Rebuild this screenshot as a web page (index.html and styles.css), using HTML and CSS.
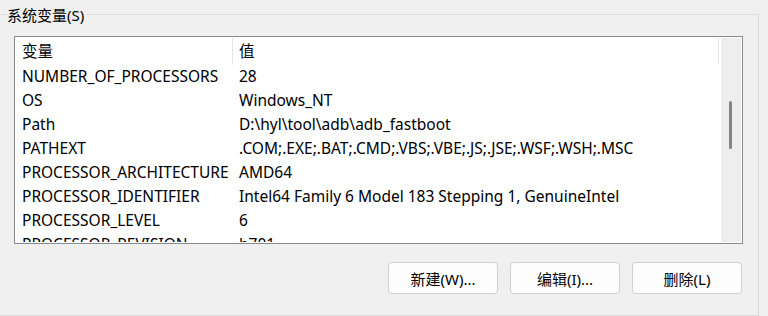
FILE: index.html
```html
<!DOCTYPE html>
<html lang="zh-CN">
<head>
  <meta charset="UTF-8">
  <title>系统变量</title>
  <link rel="stylesheet" href="styles.css">
</head>
<body>

<div class="group">
  <div class="group-title"><span>系统变量(S)</span></div>

  <!-- 变量列表 -->
  <div class="list">
    <div class="list-body">
      <div class="list-head">
        <div class="col-name">变量</div>
        <div class="col-sep"></div>
        <div class="col-value">值</div>
        <div class="col-sep"></div>
      </div>
      <div class="row"><div class="name">NUMBER_OF_PROCESSORS</div><div class="value">28</div></div>
      <div class="row"><div class="name">OS</div><div class="value">Windows_NT</div></div>
      <div class="row"><div class="name">Path</div><div class="value">D:\hyl\tool\adb\adb_fastboot</div></div>
      <div class="row"><div class="name">PATHEXT</div><div class="value">.COM;.EXE;.BAT;.CMD;.VBS;.VBE;.JS;.JSE;.WSF;.WSH;.MSC</div></div>
      <div class="row"><div class="name">PROCESSOR_ARCHITECTURE</div><div class="value">AMD64</div></div>
      <div class="row"><div class="name">PROCESSOR_IDENTIFIER</div><div class="value">Intel64 Family 6 Model 183 Stepping 1, GenuineIntel</div></div>
      <div class="row"><div class="name">PROCESSOR_LEVEL</div><div class="value">6</div></div>
      <div class="row"><div class="name">PROCESSOR_REVISION</div><div class="value">b701</div></div>
    </div>
    <div class="scrollbar">
      <div class="thumb"></div>
    </div>
  </div>

  <div class="buttons">
    <button class="btn">新建(W)...</button>
    <button class="btn">编辑(I)...</button>
    <button class="btn">删除(L)</button>
  </div>
</div>

</body>
</html>
```

FILE: styles.css
```css
body {
  margin: 0;
  background-color: #f0f0f0;
  font-family: "Noto Sans", "Noto Sans CJK SC", sans-serif;
  font-size: 15.5px;
  color: #000;
}

.group {
  margin-top: 14px;
  width: 758px;
  height: 300px;
  border-top: 1px solid #dcdcdc;
  border-right: 1px solid #dcdcdc;
  border-bottom: 1px solid #dcdcdc;
}

.group-title {
  height: 18px;
  margin-top: -9px;
  line-height: 18px;
  font-size: 15px;
}

.group-title span {
  margin-left: 7px;
  padding-right: 3px;
  background-color: #f0f0f0;
}

.list {
  display: flex;
  margin: 12px 0 0 14px;
  width: 725px;
  height: 204px;
  padding: 1px;
  border: 1px solid #868a91;
  background-color: white;
}

.list-body {
  flex: 1;
  overflow: hidden;
}

.list-head {
  display: grid;
  grid-template-columns: 216px 1px 485px 1px;
  height: 26px;
  line-height: 26px;
}

.col-name, .col-value {
  padding-left: 6px;
}

.col-sep {
  background-color: #e5e5e5;
}

.row {
  display: grid;
  grid-template-columns: 217px 1fr;
  height: 24px;
  line-height: 24px;
  white-space: nowrap;
}

.row .name, .row .value {
  padding-left: 6px;
}

.scrollbar {
  width: 20px;
  background-color: #eeeeee;
}

.thumb {
  width: 3px;
  height: 48px;
  margin: 63px 0 0 8px;
  background-color: #858585;
  border-radius: 2px;
}

.buttons {
  display: flex;
  justify-content: flex-end;
  gap: 12px;
  margin-top: 18px;
  width: 742px;
}

.btn {
  width: 110px;
  height: 32px;
  background-color: #fdfdfd;
  border: 1px solid #d0d0d0;
  border-radius: 4px;
  font-family: "Noto Sans", "Noto Sans CJK SC", sans-serif;
  font-size: 15px;
  color: #000;
}
```
